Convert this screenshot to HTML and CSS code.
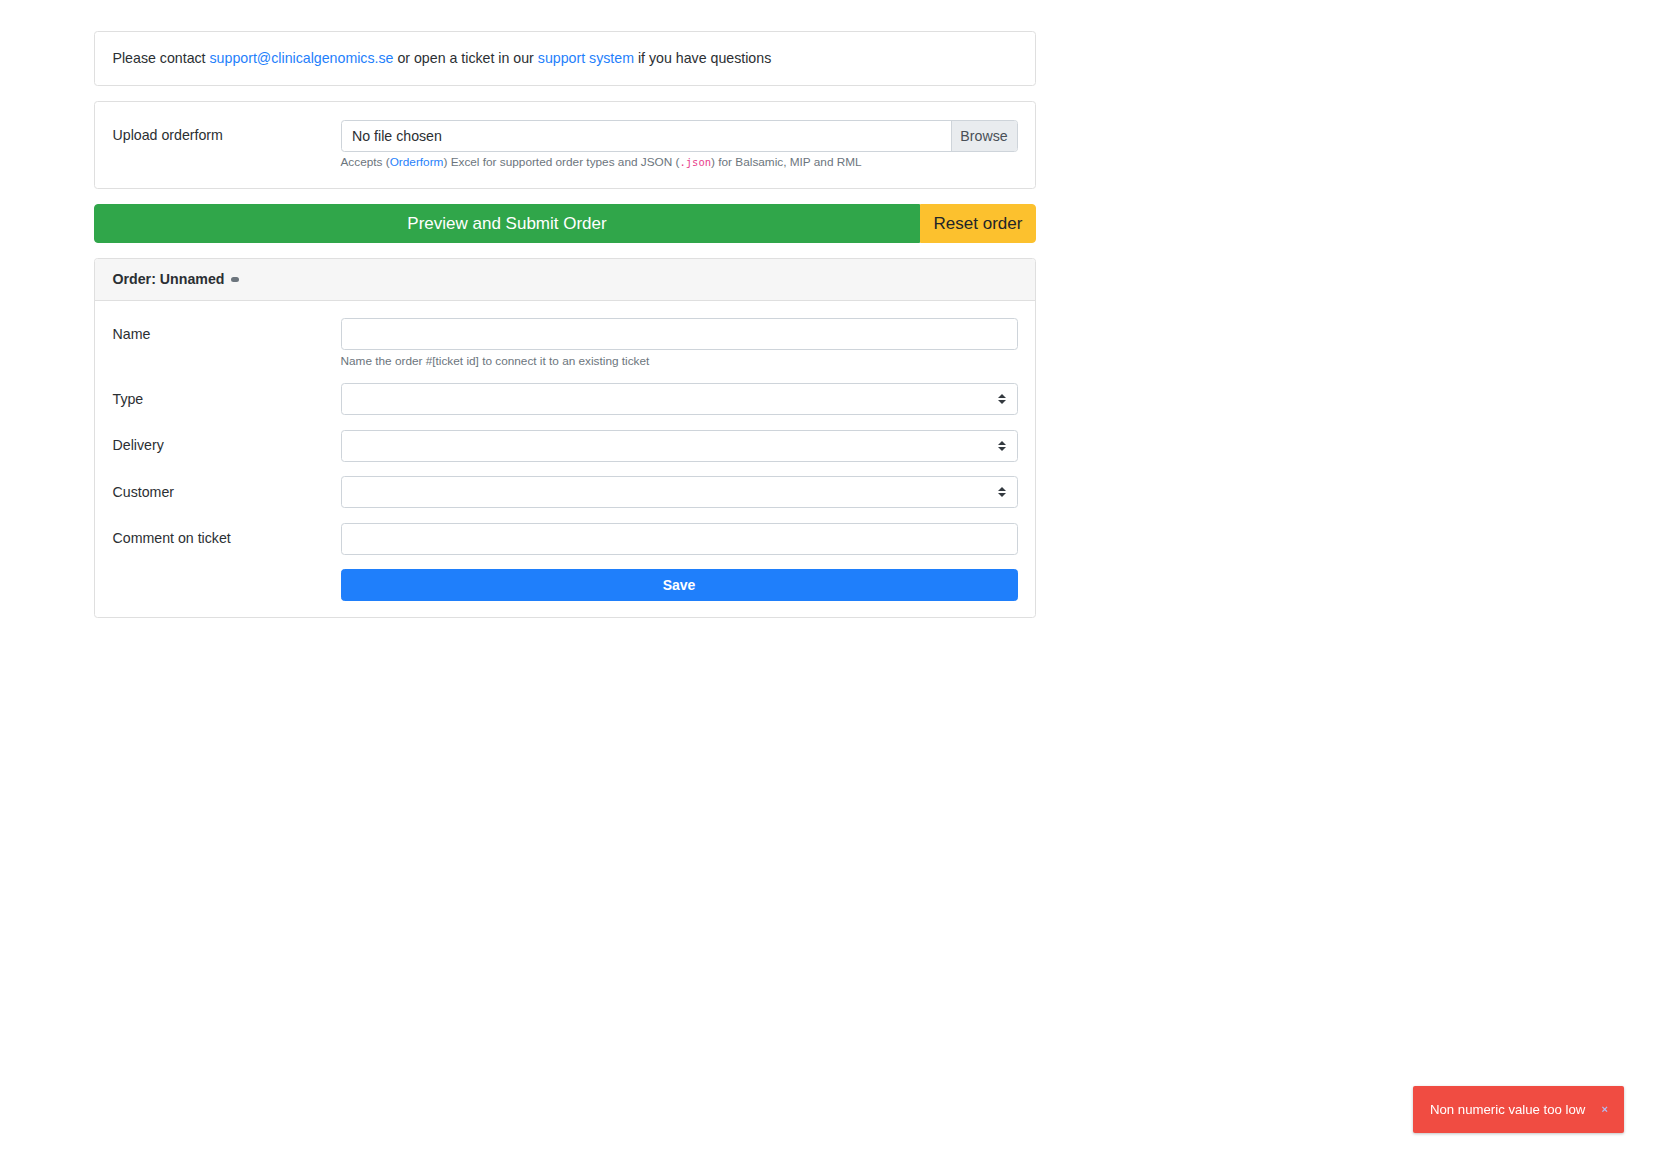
FILE: index.html
```html
<!DOCTYPE html>
<html lang="en">
<head>
<meta charset="utf-8">
<title>Order portal</title>
<link rel="stylesheet" href="styles.css">
</head>
<body>
<main class="page">
  <section class="card">
    <div class="card-body contact">
      Please contact <a href="#" class="link">support@clinicalgenomics.se</a> or open a ticket in our <a href="#" class="link">support system</a> if you have questions
    </div>
  </section>

  <section class="card">
    <div class="card-body upload-body">
      <div class="form-row">
        <label class="form-label">Upload orderform</label>
        <div class="field">
          <div class="file-input">
            <span class="file-label">No file chosen</span>
            <span class="file-browse">Browse</span>
          </div>
          <small class="help">Accepts (<a href="#" class="link">Orderform</a>) Excel for supported order types and JSON (<code class="code">.json</code>) for Balsamic, MIP and RML</small>
        </div>
      </div>
    </div>
  </section>

  <div class="btn-group">
    <button class="btn btn-success">Preview and Submit Order</button>
    <button class="btn btn-warning">Reset order</button>
  </div>

  <section class="card order-card">
    <header class="card-header">
      <strong>Order: Unnamed</strong>
      <span class="badge"></span>
    </header>
    <div class="card-body order-body">
      <div class="form-row group">
        <label class="form-label">Name</label>
        <div class="field">
          <input class="form-control" type="text">
          <small class="help">Name the order #[ticket id] to connect it to an existing ticket</small>
        </div>
      </div>
      <div class="form-row group">
        <label class="form-label">Type</label>
        <div class="field"><div class="select"></div></div>
      </div>
      <div class="form-row group">
        <label class="form-label">Delivery</label>
        <div class="field"><div class="select"></div></div>
      </div>
      <div class="form-row group">
        <label class="form-label">Customer</label>
        <div class="field"><div class="select"></div></div>
      </div>
      <div class="form-row group">
        <label class="form-label">Comment on ticket</label>
        <div class="field"><input class="form-control" type="text"></div>
      </div>
      <div class="form-row">
        <span class="form-label"></span>
        <div class="field"><button class="btn btn-primary">Save</button></div>
      </div>
    </div>
  </section>
</main>

<div class="toast">
  <span class="toast-text">Non numeric value too low</span>
  <span class="toast-close">×</span>
</div>
</body>
</html>
```

FILE: styles.css
```css
* { box-sizing: border-box; }

html, body {
  margin: 0;
  padding: 0;
  background: #fff;
}

body {
  font-family: "Liberation Sans", Arial, sans-serif;
  font-size: 14.2px;
  line-height: 1.5;
  color: #2b2f33;
}

.page {
  width: 942px;
  margin-left: 94px;
  padding-top: 31px;
  display: flex;
  flex-direction: column;
  gap: 15px;
}

.link {
  color: #1f7ffb;
  text-decoration: none;
}

.card {
  border: 1px solid #dfdfdf;
  border-radius: 3.5px;
  background: #fff;
}

.card-body {
  padding: 17.5px;
}

.contact {
  padding: 16px 17.5px;
  line-height: 21px;
}

.form-row {
  display: grid;
  grid-template-columns: 228px 1fr;
}

.form-label {
  padding-top: 5.5px;
  line-height: 21px;
}

.field {
  display: flex;
  flex-direction: column;
}

.upload-body {
  padding: 17.5px;
}

.file-input {
  display: flex;
  height: 32px;
  border: 1px solid #ced4da;
  border-radius: 3.5px;
  overflow: hidden;
}

.file-label {
  flex: 1;
  padding: 0 10.5px;
  line-height: 30px;
}

.file-browse {
  width: 66px;
  background: #e9ecef;
  border-left: 1px solid #ced4da;
  line-height: 30px;
  text-align: center;
  color: #495057;
}

.help {
  margin-top: 3.5px;
  font-size: 11.8px;
  line-height: 15px;
  color: #6c757d;
}

.code {
  font-family: "DejaVu Sans Mono", "Liberation Mono", monospace;
  font-size: 10.5px;
  color: #e83e8c;
}

.btn-group {
  display: flex;
  height: 39px;
}

.btn {
  border: 1px solid transparent;
  font-family: inherit;
  cursor: pointer;
  margin: 0;
}

.btn-success,
.btn-warning {
  font-size: 17px;
  line-height: 37px;
  padding: 0 15px;
}

.btn-success {
  flex: 1;
  background: #30a64a;
  border-color: #30a64a;
  color: #fff;
  border-radius: 4px 0 0 4px;
}

.btn-warning {
  width: 116px;
  background: #fcc12e;
  border-color: #fcc12e;
  color: #212529;
  border-radius: 0 4px 4px 0;
  padding: 0;
  text-align: center;
}

.card-header {
  display: flex;
  align-items: center;
  gap: 7px;
  padding: 10px 17.5px;
  line-height: 21px;
  background: #f6f6f6;
  border-bottom: 1px solid #dfdfdf;
  border-radius: 3.5px 3.5px 0 0;
}

.card-header strong {
  font-weight: 700;
}

.badge {
  display: inline-block;
  width: 8px;
  height: 5px;
  border-radius: 3px;
  background: #6c757d;
}

.order-body {
  padding: 17.5px 17.5px 16px;
}

.group {
  margin-bottom: 14.5px;
}

.form-control,
.select {
  display: block;
  width: 100%;
  height: 32px;
  border: 1px solid #ced4da;
  border-radius: 3.5px;
  background: #fff;
  font: inherit;
  padding: 0 10.5px;
  margin: 0;
}

.select {
  background-image: url("data:image/svg+xml,%3csvg xmlns='http://www.w3.org/2000/svg' width='4' height='5' viewBox='0 0 4 5'%3e%3cpath fill='%23343a40' d='M2 0L0 2h4zm0 5L0 3h4z'/%3e%3c/svg%3e");
  background-repeat: no-repeat;
  background-position: right 10.5px center;
  background-size: 8px 10px;
}

.btn-primary {
  display: block;
  width: 100%;
  height: 32px;
  background: #1f7ffb;
  border-color: #1f7ffb;
  color: #fff;
  font-weight: 700;
  font-size: 14px;
  border-radius: 3.5px;
}

.toast {
  position: fixed;
  right: 41px;
  bottom: 40px;
  width: 211px;
  height: 47px;
  display: flex;
  align-items: center;
  justify-content: space-between;
  padding: 0 16px 0 17px;
  background: #f04c42;
  color: #fff;
  border-radius: 2px;
  box-shadow: 0 1px 3px rgba(0, 0, 0, 0.25);
  font-size: 13.2px;
}

.toast-close {
  color: #b4bcf0;
  font-size: 11px;
  font-weight: 700;
}
```
